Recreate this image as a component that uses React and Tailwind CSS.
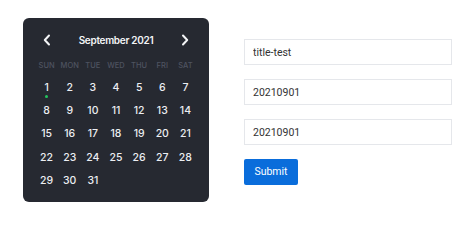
import React from 'react';

const DAYS = ['SUN', 'MON', 'TUE', 'WED', 'THU', 'FRI', 'SAT'];

function Calendar() {
  const cells = [];
  for (let i = 1; i <= 31; i++) cells.push(i);

  return (
    <div className="w-[186px] h-[184px] rounded-[6px] bg-[#262931] px-3 pt-[14px] font-['Inter',sans-serif]">
      <div className="flex items-center justify-between px-[8px] h-[16px]">
        <svg width="8" height="12" viewBox="0 0 8 12" fill="none" stroke="#f3f4f6" strokeWidth="2" strokeLinecap="round" strokeLinejoin="round">
          <path d="M6 1.5 1.8 6 6 10.5" />
        </svg>
        <span className="text-[10px] font-semibold tracking-[-0.3px] text-[#f3f4f6]">September 2021</span>
        <svg width="8" height="12" viewBox="0 0 8 12" fill="none" stroke="#f3f4f6" strokeWidth="2" strokeLinecap="round" strokeLinejoin="round">
          <path d="M2 1.5 6.2 6 2 10.5" />
        </svg>
      </div>
      <div className="grid grid-cols-7 mt-[12px]">
        {DAYS.map(d => (
          <div key={d} className="h-[12px] flex items-center justify-center text-[7.5px] font-medium text-[#4e5360]">{d}</div>
        ))}
      </div>
      <div className="grid grid-cols-7 mt-[4px]">
        {cells.map(n => (
          <div key={n} className="h-[23.3px] flex flex-col items-center justify-center relative text-[10.5px] font-medium text-[#eceef2]">
            {n}
            {n === 1 && <span className="absolute bottom-[1px] w-[3px] h-[3px] rounded-full bg-[#22c55e]" />}
          </div>
        ))}
      </div>
    </div>
  );
}

export default function App() {
  return (
    <div className="w-[474px] h-[221px] bg-white flex pt-[18px] pl-[23px]">
      <Calendar />
      <form className="ml-[35px] mt-[21px] flex flex-col font-['Roboto',sans-serif]" onSubmit={e => e.preventDefault()}>
        <input defaultValue="title-test" className="w-[208px] h-[26px] border border-[#e5e7eb] px-[8px] text-[10.5px] text-[#333] outline-none" />
        <input defaultValue="20210901" className="mt-[14px] w-[208px] h-[26px] border border-[#e5e7eb] px-[8px] text-[10.5px] text-[#333] outline-none" />
        <input defaultValue="20210901" className="mt-[14px] w-[208px] h-[26px] border border-[#e5e7eb] px-[8px] text-[10.5px] text-[#333] outline-none" />
        <button type="submit" className="mt-[14px] w-[54px] h-[26px] rounded-[2px] bg-[#0a6ddb] text-white text-[10.5px]">Submit</button>
      </form>
    </div>
  );
}
